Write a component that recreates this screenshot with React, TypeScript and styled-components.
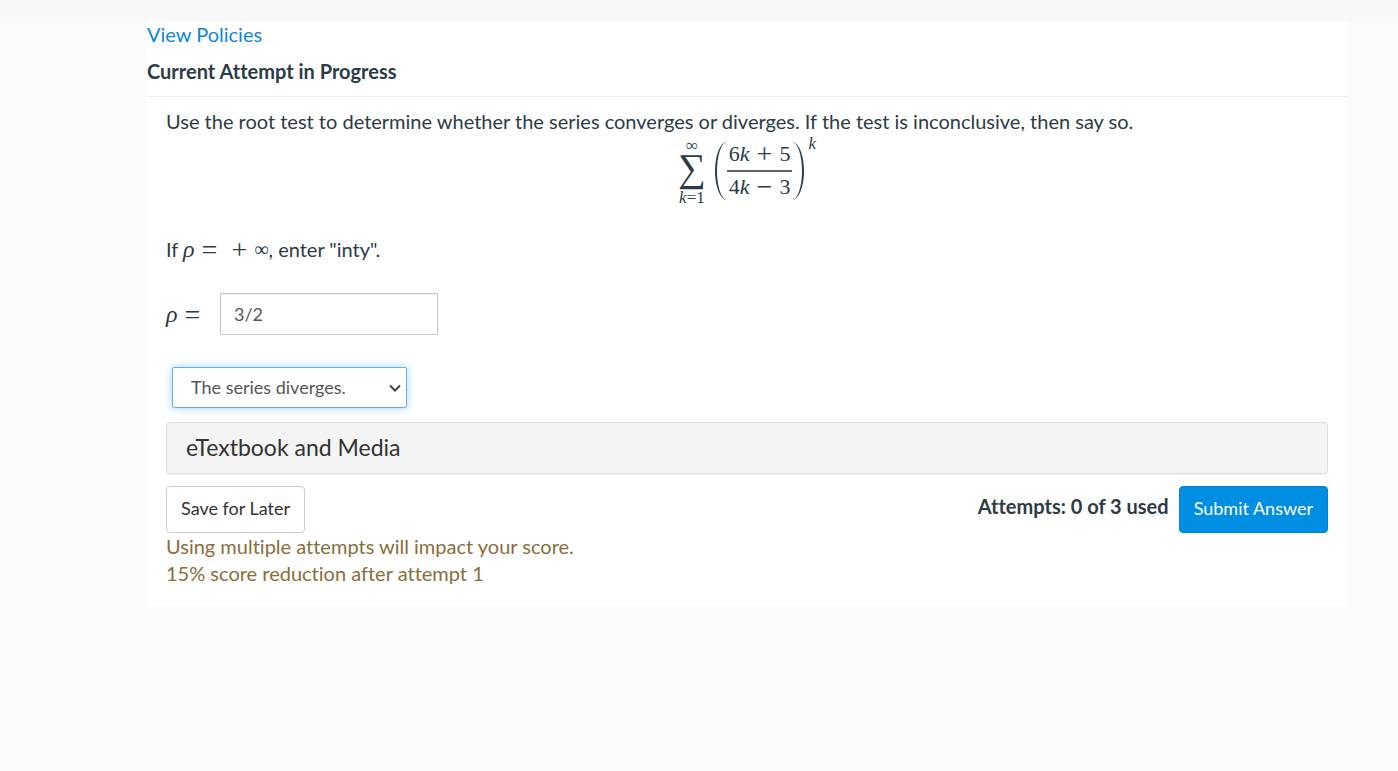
import React, { useState } from "react";
import styled, { createGlobalStyle } from "styled-components";

const GlobalStyle = createGlobalStyle`
  *, *::before, *::after { box-sizing: border-box; }
  body {
    margin: 0;
    background: #fafafa;
    color: #2d3b45;
    font-family: Lato, "Liberation Sans", sans-serif;
    font-size: 20px;
    line-height: 27px;
    font-variant-ligatures: none;
  }
  button, input, select { font-family: inherit; }
`;

const TopStrip = styled.div`
  height: 21px;
  background: #f8f8f8;
`;

const Page = styled.div`
  padding: 0 51px 0 147px;
`;

const Sheet = styled.main`
  background: #fff;
  padding-bottom: 20px;
`;

const PolicyLink = styled.a`
  display: block;
  width: fit-content;
  color: #0f86dc;
  text-decoration: none;
`;

const Heading = styled.h1`
  margin: 0;
  padding: 10px 0 11px;
  border-bottom: 1px solid #ececec;
  font-size: 20px;
  line-height: 27px;
  font-weight: 700;
`;

const Question = styled.section`
  padding: 11px 19px 0;
`;

const Paragraph = styled.p`
  margin: 0;
`;

const Formula = styled.div`
  display: flex;
  justify-content: center;
  align-items: flex-start;
  height: 73px;
  margin-bottom: 28px;
  font-family: "Liberation Serif", serif;
  font-size: 22px;
  line-height: 29px;
`;

const Sum = styled.div`
  display: grid;
  justify-items: center;
  margin: 4px 9px 0 0;
`;

const Limit = styled.span`
  font-size: 17px;
  line-height: 14px;
`;

const Sigma = styled.span`
  padding-bottom: 8px;
  font-size: 39px;
  line-height: 30px;
`;

const Paren = styled.span<{ $side: "left" | "right" }>`
  width: 12px;
  height: 58px;
  margin-top: 7px;
  ${({ $side }) =>
    $side === "left"
      ? "border-left: 2px solid; border-radius: 100% 0 0 100% / 50% 0 0 50%;"
      : "border-right: 2px solid; border-radius: 0 100% 100% 0 / 0 50% 50% 0;"}
`;

const Fraction = styled.div`
  display: grid;
  margin-top: 4px;
`;

const Term = styled.span`
  display: flex;
  justify-content: center;
  height: 31px;
  padding: 0 2px;
  & + & {
    border-top: 2px solid #56616a;
  }
`;

const Operator = styled.span`
  margin: 0 7px;
  font-size: 28px;
`;

const Exponent = styled.i`
  margin-left: 4px;
  font-size: 17px;
  line-height: 18px;
`;

const MathLine = styled.span`
  display: inline-flex;
  align-items: center;
  height: 27px;
  vertical-align: top;
  font-family: "Liberation Serif", serif;
  font-size: 28px;
  gap: 7px;
`;

const Rho = styled.i`
  font-size: 24px;
`;

const Infinity = styled.span`
  font-size: 20px;
`;

const AnswerRow = styled.div`
  display: flex;
  align-items: center;
  margin: 30px 0 32px;
`;

const AnswerLabel = styled.label`
  width: 54px;
`;

const AnswerInput = styled.input`
  width: 218px;
  height: 42px;
  padding: 0 13px;
  border: 1px solid #c7c7c7;
  border-radius: 1px;
  box-shadow: inset 0 1px 1px rgba(0, 0, 0, 0.08);
  color: #555;
  font-size: 18px;
  outline: none;
`;

const VerdictField = styled.div`
  position: relative;
  width: 235px;
  margin: 0 0 14px 6px;
`;

const Verdict = styled.select`
  display: block;
  width: 100%;
  height: 41px;
  padding: 0 30px 2px 18px;
  appearance: none;
  border: 1px solid #66afe9;
  border-radius: 2px;
  box-shadow: 0 0 8px rgba(102, 175, 233, 0.6);
  background: #fff;
  color: #555;
  font-size: 18px;
  outline: none;
`;

const Chevron = styled.svg`
  position: absolute;
  top: 17px;
  right: 6px;
  pointer-events: none;
`;

const MediaButton = styled.button`
  display: block;
  width: 100%;
  height: 52px;
  margin-bottom: 12px;
  padding: 0 19px 3px;
  border: 1px solid #ddd;
  border-radius: 4px;
  box-shadow: 0 1px 1px rgba(0, 0, 0, 0.05);
  background: #f4f4f4;
  color: #333;
  font-size: 23px;
  text-align: left;
`;

const Actions = styled.div`
  display: flex;
  align-items: center;
`;

const Attempts = styled.strong`
  margin: 0 10px 6px auto;
`;

const ActionButton = styled.button<{ $primary?: boolean }>`
  height: 47px;
  padding: 0 14px 3px;
  border: 1px solid ${({ $primary }) => ($primary ? "#0080d2" : "#ccc")};
  border-radius: 4px;
  background: ${({ $primary }) => ($primary ? "#008ee2" : "#fff")};
  color: ${({ $primary }) => ($primary ? "#fff" : "#333")};
  font-size: 18px;
`;

const Notice = styled.p`
  margin: 0;
  color: #8a6d3b;
`;

export default function App() {
  const [rho, setRho] = useState("3/2");
  return (
    <>
      <GlobalStyle />
      <TopStrip />
      <Page>
        <Sheet>
          <PolicyLink href="#policies">View Policies</PolicyLink>
          <Heading>Current Attempt in Progress</Heading>
          <Question>
            <Paragraph>
              Use the root test to determine whether the series converges or diverges. If the test is
              inconclusive, then say so.
            </Paragraph>
            <Formula>
              <Sum>
                <Limit>∞</Limit>
                <Sigma>∑</Sigma>
                <Limit>
                  <i>k</i>=1
                </Limit>
              </Sum>
              <Paren $side="left" />
              <Fraction>
                <Term>
                  6<i>k</i>
                  <Operator>+</Operator>5
                </Term>
                <Term>
                  4<i>k</i>
                  <Operator>−</Operator>3
                </Term>
              </Fraction>
              <Paren $side="right" />
              <Exponent>k</Exponent>
            </Formula>
            <Paragraph>
              If{" "}
              <MathLine>
                <Rho>ρ</Rho>
                <span>=</span>
                <span>&nbsp;+</span>
                <Infinity>∞</Infinity>
              </MathLine>
              , enter "inty".
            </Paragraph>
            <AnswerRow>
              <AnswerLabel htmlFor="rho">
                <MathLine>
                  <Rho>ρ</Rho>
                  <span>=</span>
                </MathLine>
              </AnswerLabel>
              <AnswerInput id="rho" value={rho} onChange={(e) => setRho(e.target.value)} />
            </AnswerRow>
            <VerdictField>
              <Verdict aria-label="Conclusion" defaultValue="diverges">
                <option value="diverges">The series diverges.</option>
                <option value="converges">The series converges.</option>
                <option value="inconclusive">The test is inconclusive.</option>
              </Verdict>
              <Chevron width="12" height="9" viewBox="0 0 12 9" aria-hidden="true">
                <path d="M1 1.5 L6 6.5 L11 1.5" fill="none" stroke="#444" strokeWidth="2" />
              </Chevron>
            </VerdictField>
            <MediaButton type="button">eTextbook and Media</MediaButton>
            <Actions>
              <ActionButton type="button">Save for Later</ActionButton>
              <Attempts>Attempts: 0 of 3 used</Attempts>
              <ActionButton type="submit" $primary>
                Submit Answer
              </ActionButton>
            </Actions>
            <Notice>
              Using multiple attempts will impact your score.
              <br />
              15% score reduction after attempt 1
            </Notice>
          </Question>
        </Sheet>
      </Page>
    </>
  );
}
